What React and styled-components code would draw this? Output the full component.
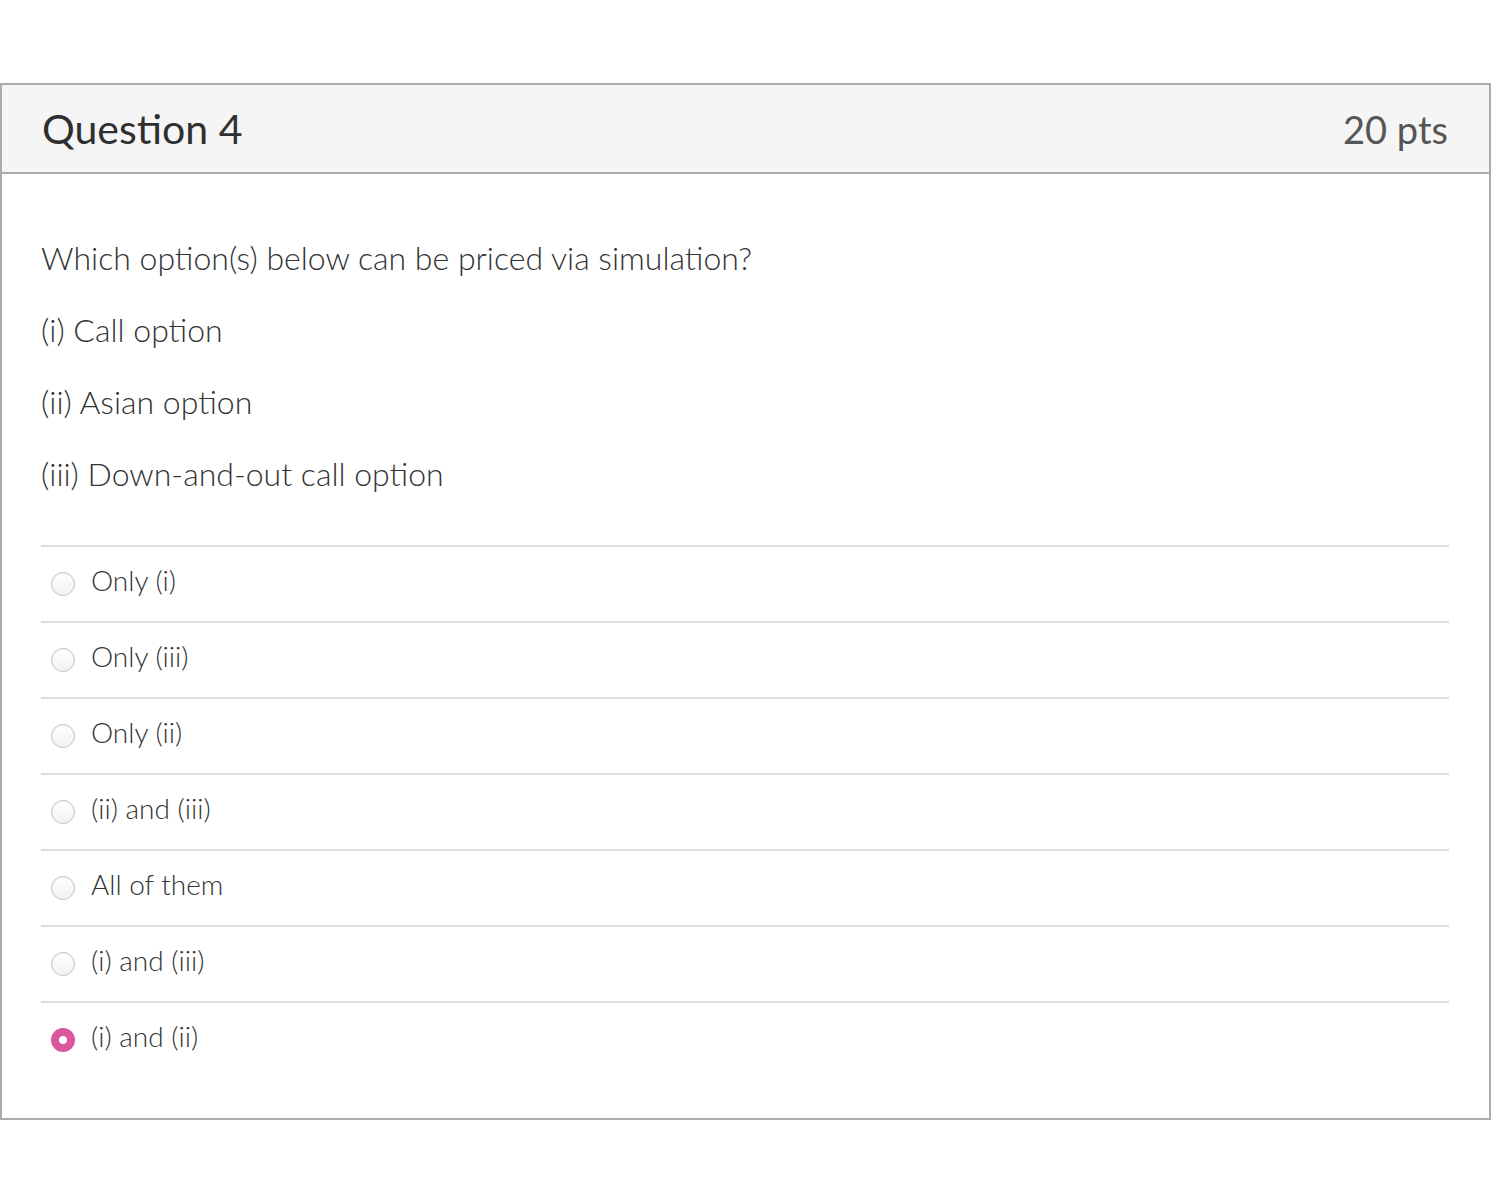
import React from 'react';
import styled, { createGlobalStyle } from 'styled-components';

const GlobalStyle = createGlobalStyle`
  body {
    margin: 0;
    background: #fff;
    font-family: Lato, "Open Sans", "Liberation Sans", sans-serif;
  }
`;

const answers = [
  { label: 'Only (i)' },
  { label: 'Only (iii)' },
  { label: 'Only (ii)' },
  { label: '(ii) and (iii)' },
  { label: 'All of them' },
  { label: '(i) and (iii)' },
  { label: '(i) and (ii)', selected: true },
];

const App = () => {
  return (
    <Page>
      <GlobalStyle />
      <Card>
        <Header>
          <Title>Question 4</Title>
          <Points>20 pts</Points>
        </Header>
        <Body>
          <Prompt>Which option(s) below can be priced via simulation?</Prompt>
          <Prompt>(i) Call option</Prompt>
          <Prompt>(ii) Asian option</Prompt>
          <Prompt>(iii) Down-and-out call option</Prompt>
          <AnswerList>
            {answers.map((a) => (
              <Answer key={a.label}>
                <Radio $checked={a.selected} />
                <AnswerLabel>{a.label}</AnswerLabel>
              </Answer>
            ))}
          </AnswerList>
        </Body>
      </Card>
    </Page>
  );
};

const Page = styled.div`
  padding-top: 83px;
`;

const Card = styled.div`
  width: 1491px;
  box-sizing: border-box;
  border: 2px solid #ababab;
  background: #fff;
`;

const Header = styled.div`
  display: flex;
  justify-content: space-between;
  align-items: center;
  height: 87px;
  padding: 0 41px 0 40px;
  background: #f5f5f5;
  border-bottom: 2px solid #ababab;
`;

const Title = styled.h2`
  margin: 0;
  font-size: 41px;
  font-weight: 400;
  color: #2f2f2f;
`;

const Points = styled.div`
  font-size: 38px;
  color: #555;
`;

const Body = styled.div`
  padding: 63px 40px 41px 39px;
`;

const Prompt = styled.p`
  margin: 0 0 30px 0;
  font-size: 32px;
  line-height: 42px;
  font-weight: 300;
  color: #333;

  &:last-of-type {
    margin-bottom: 50px;
  }
`;

const AnswerList = styled.div`
  display: flex;
  flex-direction: column;
`;

const Answer = styled.label`
  display: flex;
  align-items: center;
  gap: 16px;
  height: 76px;
  box-sizing: border-box;
  padding-left: 10px;
  border-top: 2px solid #dddddd;
`;

const Radio = styled.span`
  width: 24px;
  height: 24px;
  box-sizing: border-box;
  border-radius: 50%;
  flex-shrink: 0;
  border: ${(p) => (p.$checked ? '8px solid #d9579a' : '1px solid #c4c4c4')};
  background: ${(p) => (p.$checked ? '#fff' : 'linear-gradient(#ffffff, #f2f2f2)')};
  box-shadow: ${(p) => (p.$checked ? 'none' : 'inset 0 1px 2px rgba(0,0,0,0.06)')};
`;

const AnswerLabel = styled.span`
  padding-bottom: 8px;
  font-size: 28px;
  font-weight: 300;
  color: #333;
`;

export default App;
